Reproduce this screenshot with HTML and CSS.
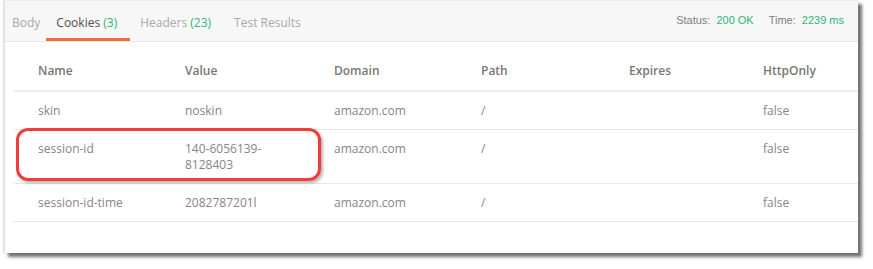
FILE: index.html
```html
<!DOCTYPE html>
<html>
<head>
<meta charset="utf-8">
<link rel="stylesheet" href="styles.css">
</head>
<body>
<div class="frame">
  <div class="panel">
    <div class="topbar">
      <nav class="tabs">
        <span class="tab">Body</span>
        <span class="tab active">Cookies <span class="count">(3)</span></span>
        <span class="tab">Headers <span class="count">(23)</span></span>
        <span class="tab">Test Results</span>
      </nav>
      <div class="meta">
        <span class="label">Status:</span><span class="val gap">200 OK</span>
        <span class="label">Time:</span><span class="val">2239 ms</span>
      </div>
    </div>
    <div class="table">
      <div class="row head">
        <div class="cell">Name</div><div class="cell">Value</div><div class="cell">Domain</div><div class="cell">Path</div><div class="cell">Expires</div><div class="cell">HttpOnly</div>
      </div>
      <div class="row">
        <div class="cell">skin</div><div class="cell">noskin</div><div class="cell">amazon.com</div><div class="cell">/</div><div class="cell"></div><div class="cell">false</div>
      </div>
      <div class="row">
        <div class="cell">session-id</div><div class="cell">140-6056139-8128403</div><div class="cell">amazon.com</div><div class="cell">/</div><div class="cell"></div><div class="cell">false</div>
      </div>
      <div class="row">
        <div class="cell">session-id-time</div><div class="cell">2082787201l</div><div class="cell">amazon.com</div><div class="cell">/</div><div class="cell"></div><div class="cell">false</div>
      </div>
    </div>
    <div class="highlight"></div>
  </div>
</div>
</body>
</html>
```

FILE: styles.css
```css
* { box-sizing: border-box; }
html, body { margin: 0; padding: 0; background: #ffffff; }
body { font-family: "Open Sans", "DejaVu Sans", sans-serif; min-height: 269px; }

.frame { padding: 0 0 16px 4px; }

.panel {
  position: relative;
  width: 854px;
  height: 253px;
  background: #ffffff;
  border-left: 1px solid #dcdcdc;
  box-shadow: 4px 4px 3px rgba(0,0,0,0.55), -1px 0 2px rgba(0,0,0,0.10);
}

.topbar {
  display: flex;
  justify-content: space-between;
  align-items: stretch;
  height: 42px;
  background: #f7f7f7;
  border-top: 1px solid #ececec;
  border-bottom: 1px solid #e6e6e6;
}

.tabs { display: flex; align-items: stretch; margin-top: -1px; }

.tab {
  padding: 15px 13px 7px 10px;
  font-size: 12px;
  line-height: 16px;
  color: #a9a9a9;
  border-bottom: 3px solid transparent;
  white-space: nowrap;
}
.tab:first-child { padding-left: 7px; padding-right: 6px; }
.tab.active { color: #505050; border-bottom-color: #f26b3a; }
.count { color: #2fb37d; }

.meta {
  display: flex;
  align-items: center;
  padding-right: 14px;
  padding-bottom: 2px;
  font-family: "Liberation Sans", Arial, sans-serif;
  font-size: 11px;
}
.label { color: #808080; margin-right: 6px; }
.val { color: #2fb37d; }
.val.gap { margin-right: 15px; }

.table { margin-left: 9px; }

.row {
  display: grid;
  grid-template-columns: 147px 149px 147px 148px 134px 1fr;
  border-bottom: 1px solid #e8e8e8;
}
.cell {
  padding: 11px 30px 10px 24px;
  font-size: 12px;
  line-height: 16px;
  color: #868686;
}
.row.head .cell {
  padding-top: 21px;
  padding-bottom: 11px;
  font-weight: 600;
  color: #777777;
}
.row.head { border-bottom: 2px solid #ececec; }

.highlight {
  position: absolute;
  left: 11px;
  top: 128px;
  width: 305px;
  height: 53px;
  border: 3px solid #f23c3c;
  border-radius: 12px;
  box-shadow: 2px 2px 3px rgba(0,0,0,0.30);
}
```
